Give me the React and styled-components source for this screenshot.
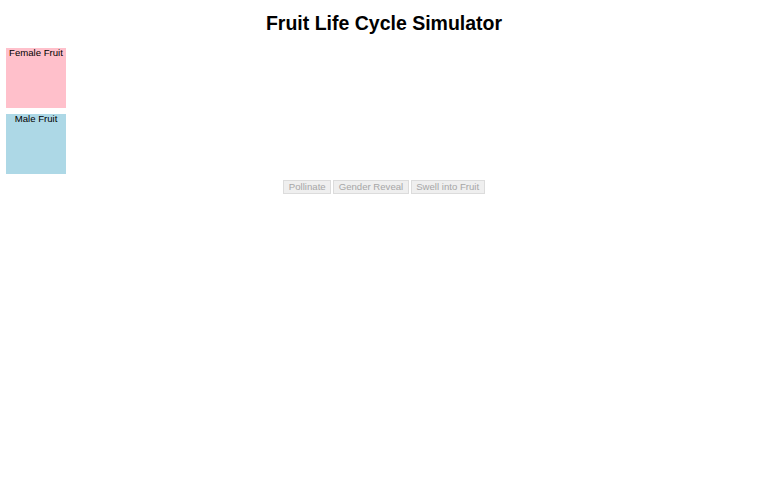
import React from 'react';
import styled, { createGlobalStyle } from 'styled-components';

const GlobalStyle = createGlobalStyle`
    body {
        margin: 0;
        font-family: "Liberation Sans", Arial, sans-serif;
        background: #fff;
    }
`;

const Page = styled.div`
    padding: 6px;
`;

const Title = styled.h1`
    margin: 4px 0 12px;
    font-size: 19.5px;
    font-weight: bold;
    text-align: center;
    color: #000;
    line-height: 26px;
`;

const Garden = styled.div`
    display: flex;
    flex-direction: column;
    gap: 6px;
`;

const Fruit = styled.div`
    width: 60px;
    height: 60px;
    background: ${props => props.color};
    font-size: 9.6px;
    text-align: center;
    line-height: 10px;
    color: #000;
`;

const Controls = styled.div`
    display: flex;
    justify-content: center;
    gap: 2px;
    margin-top: 6px;
`;

const ActionButton = styled.button`
    font-family: "Liberation Sans", Arial, sans-serif;
    font-size: 9.6px;
    padding: 0 4.5px;
    height: 14px;
    line-height: 12px;
    background: #efefef;
    border: 1px solid #dcdcdc;
    color: #a6a6a6;
    border-radius: 0;
`;

export default function App() {
    return (
        <Page>
            <GlobalStyle />
            <Title>Fruit Life Cycle Simulator</Title>
            <Garden>
                <Fruit color="#ffc0cb">Female Fruit</Fruit>
                <Fruit color="#add8e6">Male Fruit</Fruit>
            </Garden>
            <Controls>
                <ActionButton disabled>Pollinate</ActionButton>
                <ActionButton disabled>Gender Reveal</ActionButton>
                <ActionButton disabled>Swell into Fruit</ActionButton>
            </Controls>
        </Page>
    );
}
